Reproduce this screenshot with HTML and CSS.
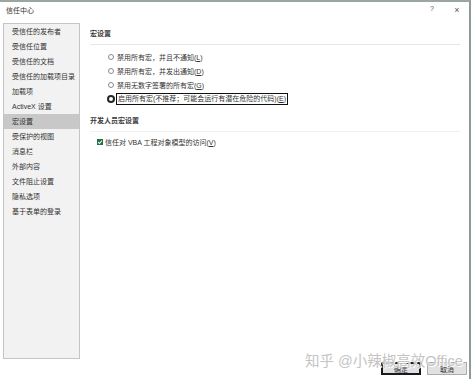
FILE: index.html
```html
<!DOCTYPE html>
<html lang="zh-CN">
<head>
    <meta charset="UTF-8">
    <meta name="viewport" content="width=device-width, initial-scale=1.0">
    <title>信任中心</title>
    <link rel="stylesheet" href="styles.css">
</head>
<body>
    <div class="dialog">
        <div class="titlebar">
            <span class="title">信任中心</span>
            <div class="controls">
                <span>?</span>
                <span class="close">×</span>
            </div>
        </div>

        <div class="body">
            <ul class="nav">
                <li>受信任的发布者</li>
                <li>受信任位置</li>
                <li>受信任的文档</li>
                <li>受信任的加载项目录</li>
                <li>加载项</li>
                <li>ActiveX 设置</li>
                <li class="active">宏设置</li>
                <li>受保护的视图</li>
                <li>消息栏</li>
                <li>外部内容</li>
                <li>文件阻止设置</li>
                <li>隐私选项</li>
                <li>基于表单的登录</li>
            </ul>

            <div class="content">
                <section class="group">
                    <h2>宏设置</h2>
                    <div class="options">
                        <label class="radio"><span class="dot"></span>禁用所有宏，并且不通知(<u>L</u>)</label>
                        <label class="radio"><span class="dot"></span>禁用所有宏，并发出通知(<u>D</u>)</label>
                        <label class="radio"><span class="dot"></span>禁用无数字签署的所有宏(<u>G</u>)</label>
                        <label class="radio checked"><span class="dot"></span><span class="focus">启用所有宏(不推荐；可能会运行有潜在危险的代码)(<u>E</u>)</span></label>
                    </div>
                </section>

                <section class="group dev">
                    <h2>开发人员宏设置</h2>
                    <div class="options">
                        <label class="check">
                            <span class="box">
                                <svg viewBox="0 0 8 8" width="6" height="6"><path d="M1.5 4.2 L3.3 6 L6.6 2" fill="none" stroke="#fff" stroke-width="1.4"/></svg>
                            </span>信任对 VBA 工程对象模型的访问(<u>V</u>)
                        </label>
                    </div>
                </section>
            </div>
        </div>

        <div class="footer">
            <button class="btn primary">确定</button>
            <button class="btn">取消</button>
        </div>

        <div class="watermark">知乎 @小辣椒高效Office</div>
    </div>
</body>
</html>
```

FILE: styles.css
```css
* {
    box-sizing: border-box;
    margin: 0;
    padding: 0;
}

body {
    width: 474px;
    height: 379px;
    overflow: hidden;
    background: #fff;
    font-family: "Liberation Sans", "Noto Sans CJK SC", sans-serif;
    font-size: 7px;
    color: #333;
}

.dialog {
    position: relative;
    width: 471px;
    height: 379px;
    border-top: 2px solid #9ca6a1;
    border-right: 2px solid #8d9a95;
    display: flex;
    flex-direction: column;
}

.titlebar {
    height: 21px;
    display: flex;
    align-items: center;
    justify-content: space-between;
    padding: 0 7px 5px 6px;
}

.controls {
    display: flex;
    gap: 15px;
    color: #555;
    font-size: 7px;
}
.controls span {
    width: 10px;
    text-align: center;
}
.controls .close {
    font-size: 9px;
}

.body {
    height: 336px;
    display: flex;
}

.nav {
    list-style: none;
    margin-left: 3px;
    width: 77px;
    border: 1px solid #c5c5c5;
    background: #f2f2f2;
}
.nav li {
    height: 15px;
    line-height: 15px;
    padding-left: 8px;
    white-space: nowrap;
}
.nav li.active {
    background: #c8c8c8;
}

.content {
    flex: 1;
    margin: 0 9px 0 10px;
}

.group h2 {
    font-size: 7px;
    font-weight: 600;
    color: #3a3a3a;
    line-height: 14px;
    padding: 4px 0 3px;
    border-bottom: 1px solid #e6e6e6;
}

.options {
    padding-top: 5px;
}

.radio {
    display: flex;
    align-items: center;
    height: 14px;
    padding-left: 18px;
}
.radio .dot {
    width: 6px;
    height: 6px;
    border: 1px solid #8a8a8a;
    border-radius: 50%;
    margin-right: 3px;
    background: #fff;
}
.radio.checked .dot {
    width: 8px;
    height: 8px;
    border: 2px solid #1f2a24;
    margin-left: -1px;
    margin-right: 1px;
}
.radio .focus {
    border: 1px solid #111;
    line-height: 10px;
    padding: 0 1px;
}

.dev {
    margin-top: 4px;
}
.dev h2 {
    border-bottom-color: #f0f0f0;
}
.dev .options {
    padding-top: 3px;
}

.check {
    display: flex;
    align-items: center;
    height: 14px;
    padding-left: 7px;
}
.check .box {
    width: 6px;
    height: 6px;
    background: #217346;
    margin-right: 2px;
    display: flex;
    align-items: center;
    justify-content: center;
}

.footer {
    display: flex;
    justify-content: flex-end;
    gap: 6px;
    padding: 3px 2px 0 0;
}

.btn {
    width: 40px;
    height: 13px;
    font-family: inherit;
    font-size: 7px;
    color: #333;
    background: #e1e1e1;
    border: 1px solid #adadad;
}
.btn.primary {
    border: 2px solid #1a1a1a;
}

.watermark {
    position: absolute;
    left: 305px;
    top: 350px;
    font-size: 14.5px;
    line-height: 18px;
    color: #c4c4c4;
    text-shadow: 0 0 1px #fff, 1px 1px 0 #fff;
    white-space: nowrap;
    pointer-events: none;
}
```
